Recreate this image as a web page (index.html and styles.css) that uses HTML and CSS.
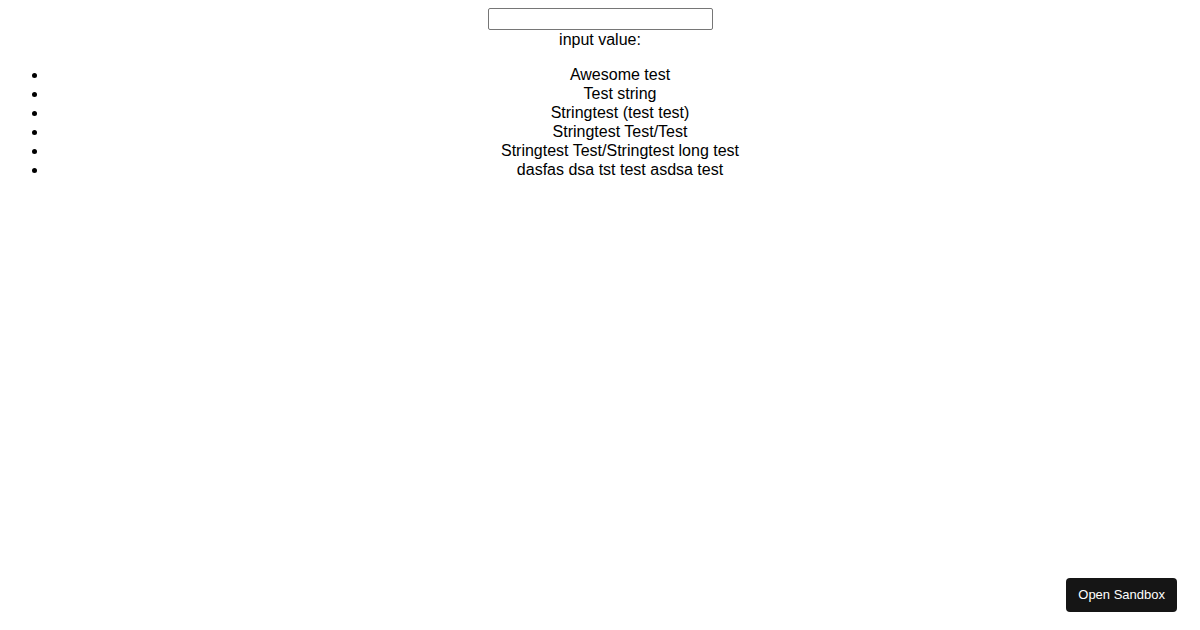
FILE: index.html
```html
<!DOCTYPE html>
<html lang="en">
<head>
  <meta charset="UTF-8" />
  <meta name="viewport" content="width=device-width, initial-scale=1.0" />
  <title>Input filter</title>
  <link rel="stylesheet" href="styles.css">
</head>
<body>
  <div class="App">
    <input type="text" class="search" />
    <div class="value">input value: </div>
    <ul>
      <li>Awesome test</li>
      <li>Test string</li>
      <li>Stringtest (test test)</li>
      <li>Stringtest Test/Test</li>
      <li>Stringtest Test/Stringtest long test</li>
      <li>dasfas dsa tst test asdsa test</li>
    </ul>
  </div>

  <a class="open-sandbox" href="#">Open Sandbox</a>
</body>
</html>
```

FILE: styles.css
```css
.App {
  font-family: "Liberation Sans", Arial, sans-serif;
  text-align: center;
  line-height: 19px;
}
.search {
  box-sizing: border-box;
  width: 225px;
  height: 22px;
  margin: 0;
  vertical-align: top;
  border: 1px solid #767676;
  border-radius: 2px;
  font-family: "Liberation Sans", Arial, sans-serif;
}
.open-sandbox {
  position: fixed;
  right: 23px;
  bottom: 18px;
  padding: 9px 12px;
  background: #151515;
  color: #fff;
  border-radius: 4px;
  font-family: "Liberation Sans", Arial, sans-serif;
  font-size: 13px;
  line-height: 16px;
  text-decoration: none;
}
```
